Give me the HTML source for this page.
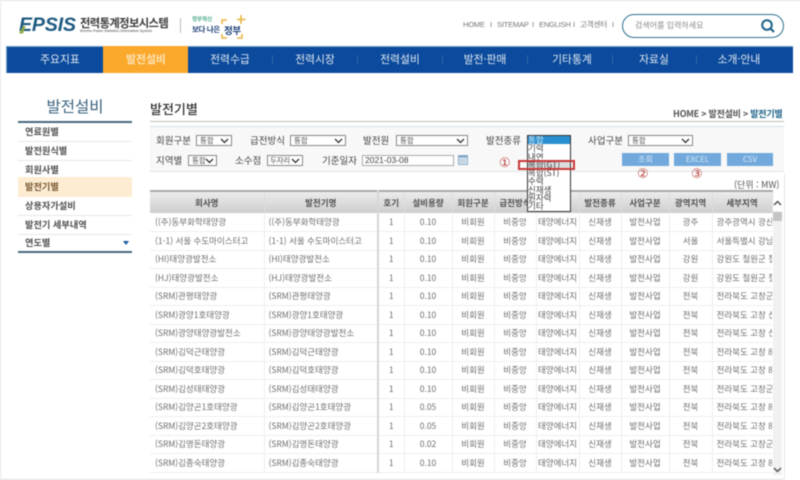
<!DOCTYPE html>
<html lang="ko"><head><meta charset="utf-8"><title>발전기별</title>
<style>
html,body{margin:0;padding:0;width:800px;height:480px;overflow:hidden;background:#fff}
#p{position:relative;width:800px;height:480px;overflow:hidden;font-family:"Liberation Sans","Noto Sans CJK KR",sans-serif;color:#555;filter:blur(.4px)}
.a,.s,.l{position:absolute;white-space:nowrap}
.nav{position:absolute;top:46px;height:27px;line-height:26px;text-align:center;color:#dfe8f2;font-size:10.8px;font-family:"Noto Sans CJK KR",sans-serif}
.sep{position:absolute;top:55px;width:1px;height:9px;background:#2f66a8}
.side{position:absolute;left:18px;width:114px;height:18px;line-height:17px;border-bottom:1px solid #e8e8e8;font-size:9.2px;font-weight:bold;color:#505050;text-indent:7px;font-family:"Noto Sans CJK KR",sans-serif}
.l{font-size:9.5px;color:#444;line-height:12px;font-family:"Noto Sans CJK KR",sans-serif}
.s{box-sizing:border-box;height:11px;border:1px solid #888;background:#fff;font-size:7.5px;line-height:9px;padding-left:3px;color:#555;font-family:"Noto Sans CJK KR",sans-serif;overflow:hidden}
.s svg{position:absolute;right:2px;top:2px}
.btn{position:absolute;top:153px;height:13px;background:#72a9dc;color:#d6e6f5;font-size:8px;line-height:13px;text-align:center;font-family:"Noto Sans CJK KR",sans-serif}
.num{position:absolute;color:#b8413b;font-size:13px;line-height:13px;font-family:"DejaVu Sans",sans-serif}
.t{position:absolute;top:19px;font-size:7.6px;line-height:12px;color:#777;letter-spacing:-.25px}
table{position:absolute;left:150px;top:190px;width:622px;border-collapse:collapse;table-layout:fixed;font-family:"Noto Sans CJK KR",sans-serif}
th{height:22px;padding:0;box-sizing:border-box;border-top:2px solid #a8a8a8;border-right:1px solid #ddd;background:linear-gradient(#ececec,#cdcdcd);font-size:8.5px;font-weight:bold;color:#505050;overflow:hidden;white-space:nowrap}
td{height:18.5px;padding:0;box-sizing:border-box;border-bottom:1px solid #eee;border-right:1px solid #eee;font-size:8.5px;line-height:12px;color:#6e6e6e;text-align:center;overflow:hidden;white-space:nowrap}
td.n{text-align:left;padding-left:5px}
td.m{text-align:left;padding-left:4px}
td.b,th.b{border-right:2px solid #d6d6d6}
td.r{text-align:left;padding-left:4px;border-right:0}
</style></head><body><div id="p">
<div class="a" style="left:0;top:0;width:800px;height:1px;background:#e2e2e2"></div>
<div class="a" style="left:0;top:0;width:1px;height:480px;background:#e8e8e8"></div>
<div class="a" style="left:0;top:479px;width:784px;height:1px;background:#ddd"></div>
<div class="a" style="left:784px;top:174px;width:1px;height:305px;background:#e8e8e8"></div>

<!-- logo -->
<div class="a" style="left:19px;top:14px;font:italic bold 19.5px/23px 'Liberation Sans',sans-serif;color:#1d5a80;letter-spacing:-.1px">EPSIS</div>
<svg class="a" style="left:18px;top:18px" width="10" height="16"><path d="M1 15.500 L5 8 L7.500 8 L5 15.500Z" fill="#8aa84a"/></svg>
<div class="a" style="left:80px;top:15px;font:bold 11.3px/16px 'Noto Sans CJK KR',sans-serif;color:#3c3c3c;letter-spacing:-.6px">전력통계정보시스템</div>
<div class="a" style="left:80px;top:29px;font:bold 3.4px/5px 'Liberation Sans',sans-serif;color:#777">Electric Power Statistics Information System</div>
<div class="a" style="left:180px;top:18px;width:1px;height:15px;background:#bbb"></div>
<div class="a" style="left:192px;top:16px;font:bold 5.5px/7px 'Noto Sans CJK KR',sans-serif;color:#4aa987">정부혁신</div>
<div class="a" style="left:192px;top:24px;font:bold 7.5px/11px 'Noto Sans CJK KR',sans-serif;color:#1c3f78;letter-spacing:-.4px">보다 나은</div>
<div class="a" style="left:224px;top:24px;font:bold 9.5px/13px 'Noto Sans CJK KR',sans-serif;color:#1c3f78;letter-spacing:-.4px">정부</div>
<svg class="a" style="left:220px;top:14px" width="28" height="26"><path d="M2 10V6H7M2 20V24H7M17 24H22V20" fill="none" stroke="#e9b23e" stroke-width="1.5"/><path d="M21 1V10M17 5.500H25.500" stroke="#e9b23e" stroke-width="1.500"/></svg>

<!-- top links -->
<div class="t" style="left:463px">HOME</div>
<div class="t" style="left:490px">I</div>
<div class="t" style="left:497px">SITEMAP</div>
<div class="t" style="left:532px">I</div>
<div class="t" style="left:539px">ENGLISH</div>
<div class="t" style="left:573px">I</div>
<div class="t" style="left:580px;font-family:'Noto Sans CJK KR',sans-serif;letter-spacing:-.2px">고객센터</div>
<div class="t" style="left:612px">I</div>
<div class="a" style="left:622px;top:14px;width:162px;height:24px;box-sizing:border-box;border:1.500px solid #2f6f8f;border-radius:12px"></div>
<div class="a" style="left:635px;top:19px;font:8px/13px 'Noto Sans CJK KR',sans-serif;color:#888">검색어를 입력하세요</div>
<svg class="a" style="left:760px;top:18px" width="16" height="16"><circle cx="7" cy="7" r="4.800" fill="none" stroke="#1f6288" stroke-width="2"/><path d="M10.500 10.500L14 14" stroke="#1f6288" stroke-width="2.200"/></svg>

<!-- nav -->
<div class="a" style="left:6px;top:46px;width:787px;height:27px;background:#0b4a9c;box-sizing:border-box;border-top:1px solid #6f9cc4;border-left:1px solid #6f9cc4"></div>
<div class="a" style="left:103px;top:46px;width:85px;height:27px;background:#fba92d"></div>
<div class="nav" style="left:20px;width:80px">주요지표</div>
<div class="nav" style="left:106px;width:80px;color:#fde3b5;font-weight:bold">발전설비</div>
<div class="nav" style="left:190px;width:80px">전력수급</div>
<div class="nav" style="left:275px;width:80px">전력시장</div>
<div class="nav" style="left:360px;width:80px">전력설비</div>
<div class="nav" style="left:445px;width:80px">발전·판매</div>
<div class="nav" style="left:532px;width:80px">기타통계</div>
<div class="nav" style="left:614px;width:80px">자료실</div>
<div class="nav" style="left:699px;width:80px">소개·안내</div>
<div class="sep" style="left:272px"></div><div class="sep" style="left:357px"></div><div class="sep" style="left:442px"></div><div class="sep" style="left:527px"></div><div class="sep" style="left:612px"></div><div class="sep" style="left:696px"></div>

<!-- sidebar -->
<div class="a" style="left:18px;top:95px;width:114px;text-align:center;font:15.500px/22px 'Noto Sans CJK KR',sans-serif;color:#37607d">발전설비</div>
<div class="a" style="left:18px;top:121px;width:114px;height:2px;background:#47697f"></div>
<div class="side" style="top:123px">연료원별</div>
<div class="side" style="top:142px">발전원식별</div>
<div class="side" style="top:161px">회원사별</div>
<div class="side" style="top:177px;height:20px;line-height:18px;background:#fdecd2;color:#7a5a35;border:0">발전기별</div>
<div class="side" style="top:197px">상용자가설비</div>
<div class="side" style="top:216px">발전기 세부내역</div>
<div class="side" style="top:234px;border:0">연도별</div>
<div class="a" style="left:123px;top:241px;border-left:3.500px solid transparent;border-right:3.500px solid transparent;border-top:4px solid #1a5a9c"></div>
<div class="a" style="left:18px;top:251px;width:114px;height:2px;background:#47697f"></div>

<!-- heading -->
<div class="a" style="left:150px;top:99px;font:500 13px/19px 'Noto Sans CJK KR',sans-serif;color:#333">발전기별</div>
<div class="a" style="left:673px;top:107px;font:bold 9px/13px 'Noto Sans CJK KR',sans-serif;color:#555;letter-spacing:-.25px">HOME &gt; 발전설비 &gt; <span style="color:#1f6288">발전기별</span></div>
<div class="a" style="left:150px;top:121px;width:634px;height:1px;background:#bbb"></div>

<!-- filter -->
<div class="a" style="left:150px;top:126px;width:634px;height:46px;background:#f8f8f8;box-sizing:border-box;border-top:1px solid #d5e2e8;border-bottom:1px solid #dde6ea"></div>
<div class="l" style="left:156px;top:134px">회원구분</div>
<div class="s" style="left:196px;top:135px;width:36px">통합<svg width="9" height="6"><path d="M1 1L4.500 4.500L8 1" fill="none" stroke="#333" stroke-width="1.300"/></svg></div>
<div class="l" style="left:250px;top:134px">급전방식</div>
<div class="s" style="left:290px;top:135px;width:56px">통합<svg width="9" height="6"><path d="M1 1L4.500 4.500L8 1" fill="none" stroke="#333" stroke-width="1.300"/></svg></div>
<div class="l" style="left:363px;top:134px">발전원</div>
<div class="s" style="left:396px;top:135px;width:72px">통합<svg width="9" height="6"><path d="M1 1L4.500 4.500L8 1" fill="none" stroke="#333" stroke-width="1.300"/></svg></div>
<div class="l" style="left:486px;top:134px">발전종류</div>
<div class="l" style="left:588px;top:134px">사업구분</div>
<div class="s" style="left:628px;top:135px;width:65px">통합<svg width="9" height="6"><path d="M1 1L4.500 4.500L8 1" fill="none" stroke="#333" stroke-width="1.300"/></svg></div>
<div class="l" style="left:156px;top:154px">지역별</div>
<div class="s" style="left:188px;top:155px;width:29px">통합<svg width="9" height="6"><path d="M1 1L4.500 4.500L8 1" fill="none" stroke="#333" stroke-width="1.300"/></svg></div>
<div class="l" style="left:235px;top:154px">소수점</div>
<div class="s" style="left:267px;top:155px;width:36px;padding-left:2px;letter-spacing:-.3px">두자리<svg width="9" height="6"><path d="M1 1L4.500 4.500L8 1" fill="none" stroke="#333" stroke-width="1.300"/></svg></div>
<div class="l" style="left:322px;top:154px">기준일자</div>
<div class="s" style="left:362px;top:155px;width:92px;font-size:8.500px;padding-left:2px;border-color:#aaa;color:#444;font-family:'Liberation Sans',sans-serif">2021-03-08</div>
<svg class="a" style="left:458px;top:155px" width="10" height="10"><rect x=".5" y=".5" width="9" height="9" fill="#d4e2ee" stroke="#8fb0cc"/><rect x=".5" y=".5" width="9" height="2" fill="#7fa6c8"/><path d="M2 5H8M2 7H8" stroke="#8fa9bf" stroke-dasharray="1 1"/></svg>
<div class="btn" style="left:622px;width:47px">조회</div>
<div class="btn" style="left:674px;width:47px">EXCEL</div>
<div class="btn" style="left:727px;width:46px">CSV</div>
<div class="num" style="left:499px;top:157px">①</div>
<div class="num" style="left:637px;top:168px">②</div>
<div class="num" style="left:691px;top:168px">③</div>
<div class="a" style="left:734px;top:178px;font:9px/13px 'Noto Sans CJK KR',sans-serif;color:#555">(단위 : MW)</div>

<!-- table -->
<table><colgroup><col style="width:114px"><col style="width:114px"><col style="width:26px"><col style="width:48px"><col style="width:42px"><col style="width:42px"><col style="width:43px"><col style="width:42px"><col style="width:48px"><col style="width:43px"><col style="width:60px"></colgroup>
<tr><th>회사명</th><th class="b">발전기명</th><th>호기</th><th>설비용량</th><th>회원구분</th><th>급전방식</th><th>발전원</th><th>발전종류</th><th>사업구분</th><th>광역지역</th><th>세부지역</th></tr>
<tr><td class="n">((주)동부화학태양광</td><td class="m b">((주)동부화학태양광</td><td>1</td><td>0.10</td><td>비회원</td><td>비중앙</td><td>태양에너지</td><td>신재생</td><td>발전사업</td><td>광주</td><td class="r">광주광역시 광산</td></tr>
<tr><td class="n">(1-1) 서울 수도마이스터고</td><td class="m b">(1-1) 서울 수도마이스터고</td><td>1</td><td>0.10</td><td>비회원</td><td>비중앙</td><td>태양에너지</td><td>신재생</td><td>발전사업</td><td>서울</td><td class="r">서울특별시 강남</td></tr>
<tr><td class="n">(HI)태양광발전소</td><td class="m b">(HI)태양광발전소</td><td>1</td><td>0.10</td><td>비회원</td><td>비중앙</td><td>태양에너지</td><td>신재생</td><td>발전사업</td><td>강원</td><td class="r">강원도 철원군 철</td></tr>
<tr><td class="n">(HJ)태양광발전소</td><td class="m b">(HJ)태양광발전소</td><td>1</td><td>0.10</td><td>비회원</td><td>비중앙</td><td>태양에너지</td><td>신재생</td><td>발전사업</td><td>강원</td><td class="r">강원도 철원군 철</td></tr>
<tr><td class="n">(SRM)관평태양광</td><td class="m b">(SRM)관평태양광</td><td>1</td><td>0.10</td><td>비회원</td><td>비중앙</td><td>태양에너지</td><td>신재생</td><td>발전사업</td><td>전북</td><td class="r">전라북도 고창군</td></tr>
<tr><td class="n">(SRM)광양1호태양광</td><td class="m b">(SRM)광양1호태양광</td><td>1</td><td>0.10</td><td>비회원</td><td>비중앙</td><td>태양에너지</td><td>신재생</td><td>발전사업</td><td>전북</td><td class="r">전라북도 고창 신</td></tr>
<tr><td class="n">(SRM)광양태양광발전소</td><td class="m b">(SRM)광양태양광발전소</td><td>1</td><td>0.10</td><td>비회원</td><td>비중앙</td><td>태양에너지</td><td>신재생</td><td>발전사업</td><td>전북</td><td class="r">전라북도 고창 신</td></tr>
<tr><td class="n">(SRM)김덕근태양광</td><td class="m b">(SRM)김덕근태양광</td><td>1</td><td>0.10</td><td>비회원</td><td>비중앙</td><td>태양에너지</td><td>신재생</td><td>발전사업</td><td>전북</td><td class="r">전라북도 고창 8</td></tr>
<tr><td class="n">(SRM)김덕호태양광</td><td class="m b">(SRM)김덕호태양광</td><td>1</td><td>0.10</td><td>비회원</td><td>비중앙</td><td>태양에너지</td><td>신재생</td><td>발전사업</td><td>전북</td><td class="r">전라북도 고창 8</td></tr>
<tr><td class="n">(SRM)김성태태양광</td><td class="m b">(SRM)김성태태양광</td><td>1</td><td>0.10</td><td>비회원</td><td>비중앙</td><td>태양에너지</td><td>신재생</td><td>발전사업</td><td>전북</td><td class="r">전라북도 고창군</td></tr>
<tr><td class="n">(SRM)김양곤1호태양광</td><td class="m b">(SRM)김양곤1호태양광</td><td>1</td><td>0.05</td><td>비회원</td><td>비중앙</td><td>태양에너지</td><td>신재생</td><td>발전사업</td><td>전북</td><td class="r">전라북도 고창 8</td></tr>
<tr><td class="n">(SRM)김양곤2호태양광</td><td class="m b">(SRM)김양곤2호태양광</td><td>1</td><td>0.05</td><td>비회원</td><td>비중앙</td><td>태양에너지</td><td>신재생</td><td>발전사업</td><td>전북</td><td class="r">전라북도 고창 8</td></tr>
<tr><td class="n">(SRM)김영돈태양광</td><td class="m b">(SRM)김영돈태양광</td><td>1</td><td>0.02</td><td>비회원</td><td>비중앙</td><td>태양에너지</td><td>신재생</td><td>발전사업</td><td>전북</td><td class="r">전라북도 고창군</td></tr>
<tr><td class="n">(SRM)김종숙태양광</td><td class="m b">(SRM)김종숙태양광</td><td>1</td><td>0.10</td><td>비회원</td><td>비중앙</td><td>태양에너지</td><td>신재생</td><td>발전사업</td><td>전북</td><td class="r">전라북도 고창 8</td></tr>
</table>

<!-- scrollbar -->
<div class="a" style="left:773px;top:191px;width:9px;height:284px;background:#f1f1f1"></div>
<div class="a" style="left:773px;top:191px;width:9px;height:20px;background:#fff"></div>
<div class="a" style="left:773px;top:212px;width:9px;height:9px;background:#c4c4c4"></div>
<svg class="a" style="left:773px;top:200px" width="9" height="6"><path d="M1 5L4.500 1.500L8 5" fill="none" stroke="#555" stroke-width="1.500"/></svg>
<svg class="a" style="left:773px;top:467px" width="9" height="6"><path d="M1 1L4.500 4.500L8 1" fill="none" stroke="#555" stroke-width="1.500"/></svg>

<!-- dropdown -->
<div class="a" style="left:527px;top:135px;width:44px;height:77px;box-sizing:border-box;border:1px solid #333;background:#fff;overflow:hidden;font:8.500px/8.300px 'Noto Sans CJK KR',sans-serif;color:#444">
<div style="background:#2a8fd0;color:#cfe6f5">통합</div><div>기력</div><div>내연</div><div style="background:#ddd">복합(GT)</div><div>복합(ST)</div><div>수력</div><div>신재생</div><div>원자력</div><div>기타</div></div>
<div class="a" style="left:518px;top:160px;width:57px;height:10px;box-sizing:border-box;border:2px solid #c8383a"></div>
</div></body></html>
